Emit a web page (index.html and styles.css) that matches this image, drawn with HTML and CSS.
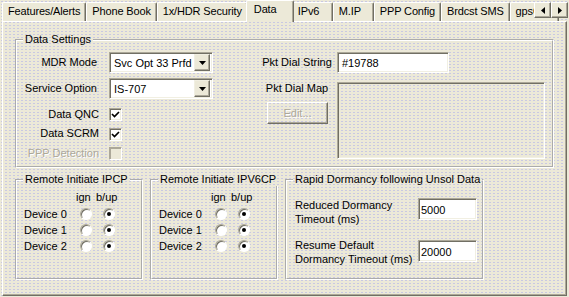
FILE: index.html
```html
<!DOCTYPE html>
<html lang="en">
<head>
	<meta charset="UTF-8">
	<title>Data</title>
	<link rel="stylesheet" href="styles.css">
</head>
<body>
	<div class="dlg">
		<div class="tabs">
			<div class="tab">Features/Alerts</div>
			<div class="tab">Phone Book</div>
			<div class="tab">1x/HDR Security</div>
			<div class="tab sel">Data</div>
			<div class="tab">IPv6</div>
			<div class="tab">M.IP</div>
			<div class="tab">PPP Config</div>
			<div class="tab">Brdcst SMS</div>
			<div class="tab">gpsOne</div>
			<div class="spin">
				<span class="sbtn"><svg width="4" height="7"><polygon points="4,0 4,7 0,3.5" fill="#000"/></svg></span>
				<span class="sbtn"><svg width="4" height="7"><polygon points="0,0 0,7 4,3.5" fill="#000"/></svg></span>
			</div>
		</div>

		<div class="panel">
			<fieldset class="grp main">
				<legend>Data Settings</legend>
				<div class="body">
					<div class="left">
						<div class="lbl">MDR Mode</div>
						<div class="combo"><span class="val">Svc Opt 33 Prfd</span><span class="drop"><svg width="7" height="4"><polygon points="0,0 7,0 3.5,4" fill="#000"/></svg></span></div>

						<div class="lbl">Service Option</div>
						<div class="combo"><span class="val">IS-707</span><span class="drop"><svg width="7" height="4"><polygon points="0,0 7,0 3.5,4" fill="#000"/></svg></span></div>

						<div class="lbl chk-lbl">Data QNC</div>
						<span class="chk"><svg width="9" height="9"><path d="M1 4 L3.5 6.5 L8 2" fill="none" stroke="#000" stroke-width="1.7"/></svg></span>

						<div class="lbl chk-lbl">Data SCRM</div>
						<span class="chk"><svg width="9" height="9"><path d="M1 4 L3.5 6.5 L8 2" fill="none" stroke="#000" stroke-width="1.7"/></svg></span>

						<div class="lbl chk-lbl off">PPP Detection</div>
						<span class="chk dis"></span>
					</div>

					<div class="right">
						<div class="lbl2">Pkt Dial String</div>
						<div class="field dial">#19788</div>

						<div class="mapcol">
							<div class="maplbl">Pkt Dial Map</div>
							<div class="btn">Edit...</div>
						</div>
						<div class="list"></div>
					</div>
				</div>
			</fieldset>

			<div class="lower">
				<fieldset class="grp dev">
					<legend>Remote Initiate IPCP</legend>
					<div class="devgrid">
						<span></span><span class="hd">ign</span><span class="hd">b/up</span>
						<span>Device 0</span><span class="rad r1"></span><span class="rad r2 on"></span>
						<span>Device 1</span><span class="rad r1"></span><span class="rad r2 on"></span>
						<span>Device 2</span><span class="rad r1"></span><span class="rad r2 on"></span>
					</div>
				</fieldset>

				<fieldset class="grp dev">
					<legend>Remote Initiate IPV6CP</legend>
					<div class="devgrid">
						<span></span><span class="hd">ign</span><span class="hd">b/up</span>
						<span>Device 0</span><span class="rad r1"></span><span class="rad r2 on"></span>
						<span>Device 1</span><span class="rad r1"></span><span class="rad r2 on"></span>
						<span>Device 2</span><span class="rad r1"></span><span class="rad r2 on"></span>
					</div>
				</fieldset>

				<fieldset class="grp dorm">
					<legend>Rapid Dormancy following Unsol Data</legend>
					<div class="dormgrid">
						<div class="dlbl">Reduced Dormancy<br>Timeout (ms)</div>
						<div class="field num">5000</div>
						<div class="dlbl">Resume Default<br>Dormancy Timeout (ms)</div>
						<div class="field num second">20000</div>
					</div>
				</fieldset>
			</div>
		</div>
	</div>
</body>
</html>
```

FILE: styles.css
```css
body {
	margin: 0;
	background: #ECE9D8;
	font: 11px "Liberation Sans", Arial, sans-serif;
	color: #000;
}
.dlg {
	width: 569px;
	height: 297px;
	overflow: hidden;
	background-color: #ECE9D8;
	background-image: radial-gradient(circle, #c9c8e2 0.5px, transparent 0.9px);
	background-size: 4px 3px;
}

/* tabs */
.tabs {
	display: flex;
	align-items: flex-start;
	height: 21px;
	padding-left: 2px;
	position: relative;
	z-index: 1;
	letter-spacing: -0.15px;
}
.tab {
	box-sizing: border-box;
	height: 19px;
	margin-top: 2px;
	min-width: 41px;
	padding: 0 5px;
	line-height: 17px;
	white-space: nowrap;
	background: #ECE9D8;
	border-top: 1px solid #fff;
	border-left: 1px solid #fff;
	border-right: 1px solid #716F64;
	box-shadow: inset -1px 0 #ACA899;
	border-radius: 2px 2px 0 0;
}
.tab.sel {
	height: 22px;
	margin: 0 -2px;
	min-width: 48px;
	padding: 0 7px;
	position: relative;
	z-index: 2;
}
.spin {
	position: absolute;
	top: 2px;
	right: 1px;
	display: flex;
	z-index: 3;
}
.sbtn {
	box-sizing: border-box;
	width: 17px;
	height: 16px;
	display: flex;
	align-items: center;
	justify-content: center;
	background: #ECE9D8;
	border: 1px solid;
	border-color: #fff #716F64 #716F64 #fff;
	box-shadow: inset -1px -1px #ACA899;
}

/* panel */
.panel {
	box-sizing: border-box;
	width: 565px;
	height: 275px;
	margin-left: 2px;
	padding: 11px 0 0 12px;
	border: 1px solid;
	border-color: #fff #716F64 #716F64 #fff;
	box-shadow: inset -1px -1px #ACA899;
}
.grp {
	box-sizing: border-box;
	margin: 0;
	padding: 0;
	min-width: 0;
	border: 2px groove #fff;
}
.grp legend {
	margin-left: 6px;
	padding: 0 2px;
	line-height: 13px;
	white-space: nowrap;
}
.main {
	width: 539px;
}
.main .body {
	display: flex;
	padding: 6px 0 3px 0;
}

.left {
	display: grid;
	grid-template-columns: 80px 104px;
	grid-template-rows: 26px 27px 19px 20px 19px;
	column-gap: 12px;
	align-items: start;
}
.lbl {
	text-align: right;
	line-height: 21px;
	white-space: nowrap;
}
.chk-lbl {
	line-height: 19px;
	margin-right: -2px;
}
.off {
	color: #ACA899;
	text-shadow: 1px 1px 0 #fff;
}

.combo {
	box-sizing: border-box;
	display: flex;
	width: 104px;
	height: 21px;
	padding: 2px;
	background: #fff;
	border: 1px solid;
	border-color: #ACA899 #fff #fff #ACA899;
	box-shadow: inset 1px 1px #716F64, inset -1px -1px #F1EFE2;
}
.combo .val {
	flex: 1;
	padding-left: 2px;
	line-height: 17px;
	white-space: nowrap;
}
.drop {
	box-sizing: border-box;
	width: 16px;
	height: 17px;
	margin-top: -1px;
	display: flex;
	align-items: center;
	justify-content: center;
	background: #ECE9D8;
	border: 1px solid;
	border-color: #F1EFE2 #716F64 #716F64 #F1EFE2;
	box-shadow: inset -1px -1px #ACA899;
}

.chk {
	box-sizing: border-box;
	align-self: center;
	width: 13px;
	height: 13px;
	display: flex;
	align-items: center;
	justify-content: center;
	background: #fff;
	border: 1px solid;
	border-color: #ACA899 #fff #fff #ACA899;
	box-shadow: inset 1px 1px #716F64, inset -1px -1px #F1EFE2;
}
.chk.dis {
	background: #ECE9D8;
	box-shadow: inset 1px 1px #ACA899;
}

.right {
	display: grid;
	grid-template-columns: 72px 208px;
	grid-template-rows: 26px auto;
	column-gap: 4px;
	margin-left: 48px;
	align-items: start;
}
.lbl2 {
	text-align: center;
	line-height: 21px;
	white-space: nowrap;
}
.field {
	box-sizing: border-box;
	height: 21px;
	padding: 2px 4px 0;
	line-height: 16px;
	background: #fff;
	border: 1px solid;
	border-color: #ACA899 #fff #fff #ACA899;
	box-shadow: inset 1px 1px #716F64, inset -1px -1px #F1EFE2;
}
.dial {
	width: 112px;
}
.mapcol {
	display: flex;
	flex-direction: column;
	align-items: center;
}
.maplbl {
	margin-top: 3px;
	line-height: 14px;
	white-space: nowrap;
}
.btn {
	box-sizing: border-box;
	width: 61px;
	height: 22px;
	margin-top: 7px;
	margin-left: 1px;
	line-height: 20px;
	text-align: center;
	color: #ACA899;
	text-shadow: 1px 1px 0 #fff;
	border: 1px solid;
	border-color: #fff #716F64 #716F64 #fff;
	box-shadow: inset -1px -1px #ACA899;
}
.list {
	box-sizing: border-box;
	width: 208px;
	height: 77px;
	margin-top: 4px;
	border: 1px solid;
	border-color: #ACA899 #fff #fff #ACA899;
	box-shadow: inset 1px 1px #716F64, inset -1px -1px #F1EFE2;
}

/* lower group boxes */
.lower {
	display: flex;
	gap: 7px;
	margin-top: 5px;
}
.dev {
	width: 128px;
	height: 107px;
}
.devgrid {
	display: grid;
	grid-template-columns: 52px 20px 26px;
	grid-template-rows: 17px 16px 16px 16px;
	align-items: center;
	padding: 3px 0 0 7px;
	white-space: nowrap;
}
.hd {
	align-self: start;
	line-height: 16px;
}
.rad {
	box-sizing: border-box;
	width: 12px;
	height: 12px;
	border-radius: 50%;
	background: #fff;
	border: 1px solid;
	border-color: #ACA899 #fff #fff #ACA899;
	box-shadow: inset 1px 1px #716F64;
	display: flex;
	align-items: center;
	justify-content: center;
}
.r1 {
	margin-left: 4px;
}
.r2 {
	margin-left: 7px;
}
.rad.on::after {
	content: "";
	width: 4px;
	height: 4px;
	border-radius: 50%;
	background: #000;
}
.dorm {
	width: 199px;
	height: 107px;
}
.dormgrid {
	display: grid;
	grid-template-columns: 123px 59px;
	row-gap: 12px;
	align-items: start;
	padding: 12px 0 0 8px;
}
.dlbl {
	line-height: 14px;
	white-space: nowrap;
}
.num {
	height: 22px;
	padding-top: 3px;
	padding-left: 2px;
}
.num.second {
	margin-top: 2px;
}
```
